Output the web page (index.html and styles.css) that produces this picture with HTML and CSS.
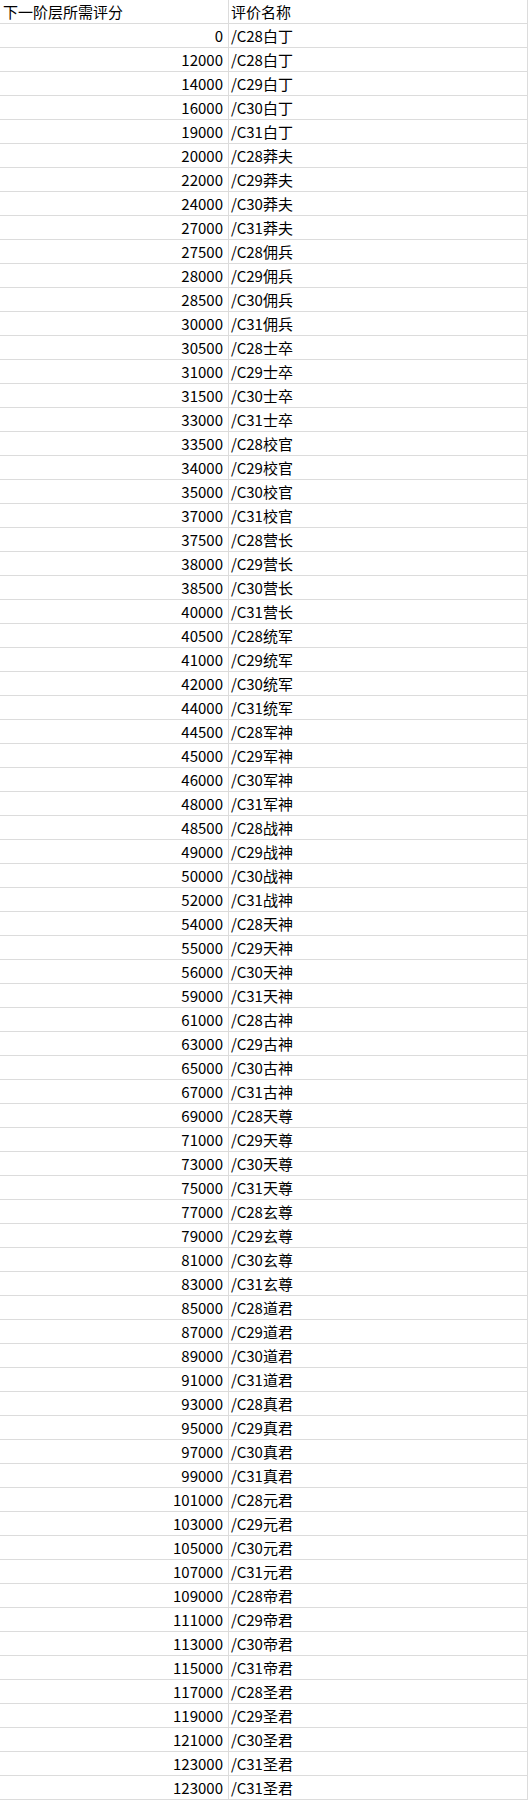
FILE: index.html
```html
<!DOCTYPE html>
<html lang="zh-CN">
<head>
<meta charset="utf-8">
<title>评价</title>
<link rel="stylesheet" href="styles.css">
</head>
<body>
<div class="sheet">
<div class="row head"><div class="c1">下一阶层所需评分</div><div class="c2">评价名称</div></div>
<div class="row"><div class="c1">0</div><div class="c2">/C28白丁</div></div>
<div class="row"><div class="c1">12000</div><div class="c2">/C28白丁</div></div>
<div class="row"><div class="c1">14000</div><div class="c2">/C29白丁</div></div>
<div class="row"><div class="c1">16000</div><div class="c2">/C30白丁</div></div>
<div class="row"><div class="c1">19000</div><div class="c2">/C31白丁</div></div>
<div class="row"><div class="c1">20000</div><div class="c2">/C28莽夫</div></div>
<div class="row"><div class="c1">22000</div><div class="c2">/C29莽夫</div></div>
<div class="row"><div class="c1">24000</div><div class="c2">/C30莽夫</div></div>
<div class="row"><div class="c1">27000</div><div class="c2">/C31莽夫</div></div>
<div class="row"><div class="c1">27500</div><div class="c2">/C28佣兵</div></div>
<div class="row"><div class="c1">28000</div><div class="c2">/C29佣兵</div></div>
<div class="row"><div class="c1">28500</div><div class="c2">/C30佣兵</div></div>
<div class="row"><div class="c1">30000</div><div class="c2">/C31佣兵</div></div>
<div class="row"><div class="c1">30500</div><div class="c2">/C28士卒</div></div>
<div class="row"><div class="c1">31000</div><div class="c2">/C29士卒</div></div>
<div class="row"><div class="c1">31500</div><div class="c2">/C30士卒</div></div>
<div class="row"><div class="c1">33000</div><div class="c2">/C31士卒</div></div>
<div class="row"><div class="c1">33500</div><div class="c2">/C28校官</div></div>
<div class="row"><div class="c1">34000</div><div class="c2">/C29校官</div></div>
<div class="row"><div class="c1">35000</div><div class="c2">/C30校官</div></div>
<div class="row"><div class="c1">37000</div><div class="c2">/C31校官</div></div>
<div class="row"><div class="c1">37500</div><div class="c2">/C28营长</div></div>
<div class="row"><div class="c1">38000</div><div class="c2">/C29营长</div></div>
<div class="row"><div class="c1">38500</div><div class="c2">/C30营长</div></div>
<div class="row"><div class="c1">40000</div><div class="c2">/C31营长</div></div>
<div class="row"><div class="c1">40500</div><div class="c2">/C28统军</div></div>
<div class="row"><div class="c1">41000</div><div class="c2">/C29统军</div></div>
<div class="row"><div class="c1">42000</div><div class="c2">/C30统军</div></div>
<div class="row"><div class="c1">44000</div><div class="c2">/C31统军</div></div>
<div class="row"><div class="c1">44500</div><div class="c2">/C28军神</div></div>
<div class="row"><div class="c1">45000</div><div class="c2">/C29军神</div></div>
<div class="row"><div class="c1">46000</div><div class="c2">/C30军神</div></div>
<div class="row"><div class="c1">48000</div><div class="c2">/C31军神</div></div>
<div class="row"><div class="c1">48500</div><div class="c2">/C28战神</div></div>
<div class="row"><div class="c1">49000</div><div class="c2">/C29战神</div></div>
<div class="row"><div class="c1">50000</div><div class="c2">/C30战神</div></div>
<div class="row"><div class="c1">52000</div><div class="c2">/C31战神</div></div>
<div class="row"><div class="c1">54000</div><div class="c2">/C28天神</div></div>
<div class="row"><div class="c1">55000</div><div class="c2">/C29天神</div></div>
<div class="row"><div class="c1">56000</div><div class="c2">/C30天神</div></div>
<div class="row"><div class="c1">59000</div><div class="c2">/C31天神</div></div>
<div class="row"><div class="c1">61000</div><div class="c2">/C28古神</div></div>
<div class="row"><div class="c1">63000</div><div class="c2">/C29古神</div></div>
<div class="row"><div class="c1">65000</div><div class="c2">/C30古神</div></div>
<div class="row"><div class="c1">67000</div><div class="c2">/C31古神</div></div>
<div class="row"><div class="c1">69000</div><div class="c2">/C28天尊</div></div>
<div class="row"><div class="c1">71000</div><div class="c2">/C29天尊</div></div>
<div class="row"><div class="c1">73000</div><div class="c2">/C30天尊</div></div>
<div class="row"><div class="c1">75000</div><div class="c2">/C31天尊</div></div>
<div class="row"><div class="c1">77000</div><div class="c2">/C28玄尊</div></div>
<div class="row"><div class="c1">79000</div><div class="c2">/C29玄尊</div></div>
<div class="row"><div class="c1">81000</div><div class="c2">/C30玄尊</div></div>
<div class="row"><div class="c1">83000</div><div class="c2">/C31玄尊</div></div>
<div class="row"><div class="c1">85000</div><div class="c2">/C28道君</div></div>
<div class="row"><div class="c1">87000</div><div class="c2">/C29道君</div></div>
<div class="row"><div class="c1">89000</div><div class="c2">/C30道君</div></div>
<div class="row"><div class="c1">91000</div><div class="c2">/C31道君</div></div>
<div class="row"><div class="c1">93000</div><div class="c2">/C28真君</div></div>
<div class="row"><div class="c1">95000</div><div class="c2">/C29真君</div></div>
<div class="row"><div class="c1">97000</div><div class="c2">/C30真君</div></div>
<div class="row"><div class="c1">99000</div><div class="c2">/C31真君</div></div>
<div class="row"><div class="c1">101000</div><div class="c2">/C28元君</div></div>
<div class="row"><div class="c1">103000</div><div class="c2">/C29元君</div></div>
<div class="row"><div class="c1">105000</div><div class="c2">/C30元君</div></div>
<div class="row"><div class="c1">107000</div><div class="c2">/C31元君</div></div>
<div class="row"><div class="c1">109000</div><div class="c2">/C28帝君</div></div>
<div class="row"><div class="c1">111000</div><div class="c2">/C29帝君</div></div>
<div class="row"><div class="c1">113000</div><div class="c2">/C30帝君</div></div>
<div class="row"><div class="c1">115000</div><div class="c2">/C31帝君</div></div>
<div class="row"><div class="c1">117000</div><div class="c2">/C28圣君</div></div>
<div class="row"><div class="c1">119000</div><div class="c2">/C29圣君</div></div>
<div class="row"><div class="c1">121000</div><div class="c2">/C30圣君</div></div>
<div class="row"><div class="c1">123000</div><div class="c2">/C31圣君</div></div>
<div class="row"><div class="c1">123000</div><div class="c2">/C31圣君</div></div>
</div>
</body>
</html>
```
FILE: styles.css
```css
html, body {
  margin: 0;
  padding: 0;
  background: #ffffff;
}
.sheet {
  width: 528px;
  font-family: "Noto Sans CJK SC", "Noto Sans", sans-serif;
  font-size: 15px;
  color: #000000;
}
.row {
  display: grid;
  grid-template-columns: 229px 299px;
  height: 24px;
}
.c1, .c2 {
  box-sizing: border-box;
  height: 24px;
  line-height: 23px;
  border-bottom: 1px solid #dcdcdc;
  border-right: 1px solid #dcdcdc;
  white-space: nowrap;
  overflow: hidden;
}
.c1 {
  text-align: right;
  padding-right: 5px;
}
.c2 {
  padding-left: 2px;
}
.head .c1 {
  text-align: left;
  padding-left: 3px;
  padding-right: 0;
}
```
